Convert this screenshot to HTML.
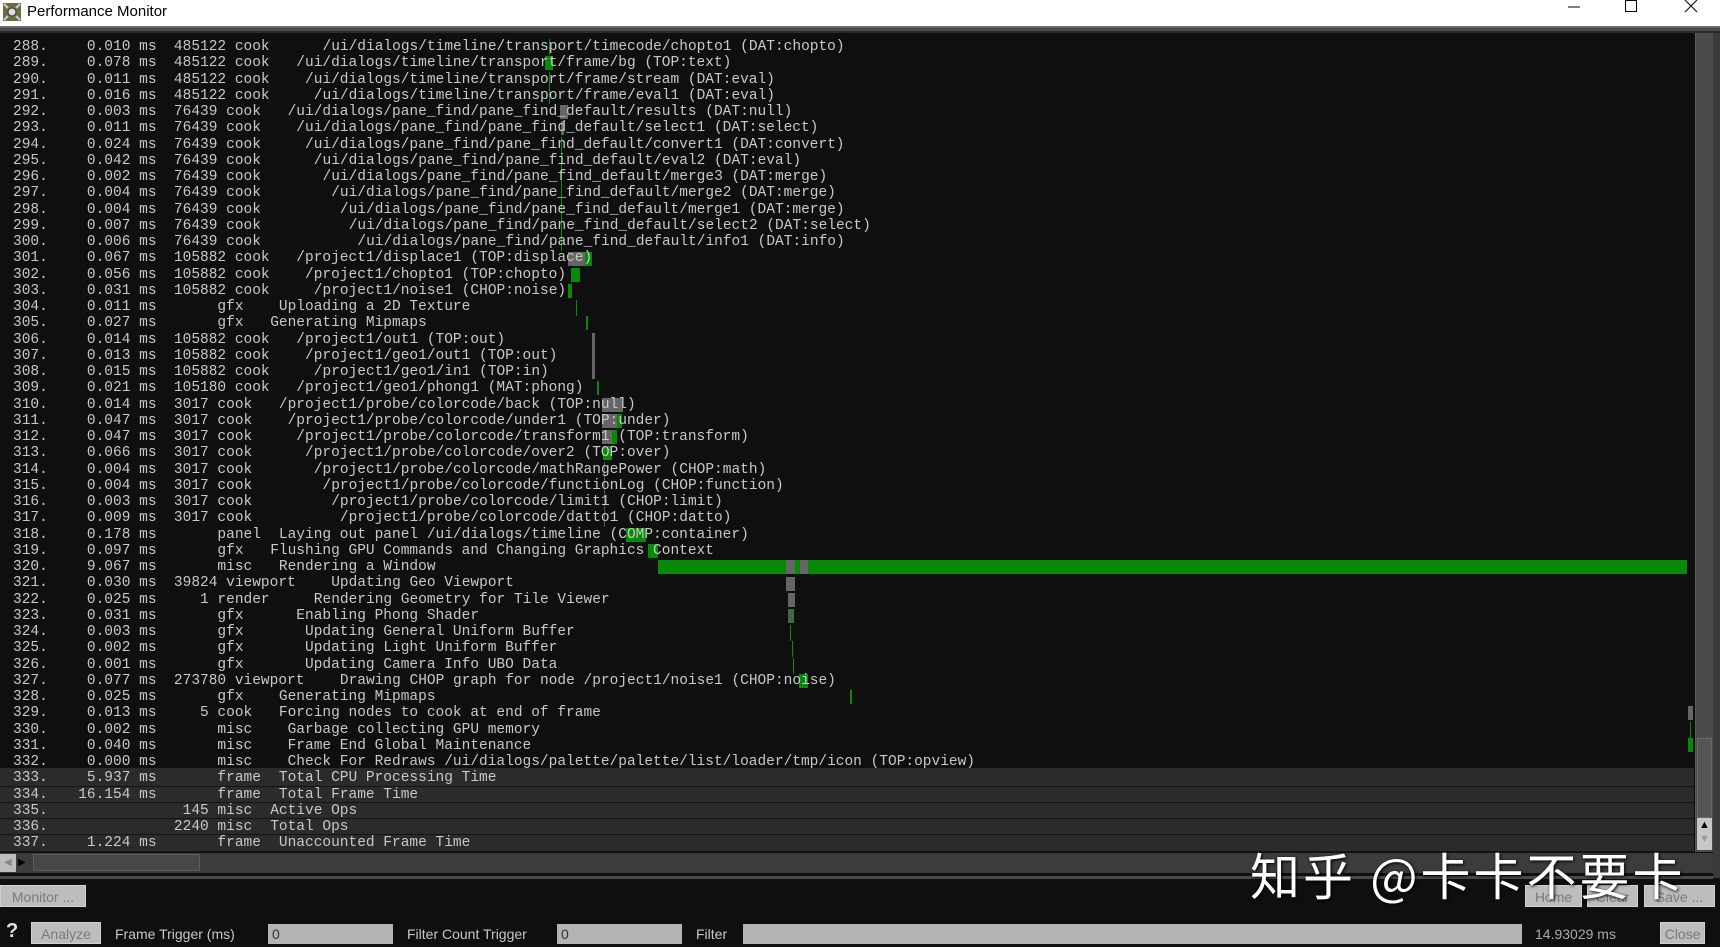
<!DOCTYPE html>
<html><head><meta charset="utf-8"><style>
*{margin:0;padding:0;box-sizing:border-box}
body{width:1720px;height:947px;background:#0f0f0f;position:relative;overflow:hidden;font-family:"Liberation Sans",sans-serif}
#title{position:absolute;left:0;top:0;width:1720px;height:26px;background:#fff;color:#000;font-size:15px}
#title .t{position:absolute;left:27px;top:3px}
#frame{position:absolute;left:0;top:26px;width:1720px;height:7px;background:#4a4a4a;border-top:2px solid #6a6a6a;border-bottom:2px solid #2a2a2a}
#rows{position:absolute;left:0;top:39px;width:1694px;font-family:"Liberation Mono",monospace;font-size:14.5px;color:#c8c8c8}
.r{height:16.25px;position:relative;white-space:pre;line-height:16px}
.r i{font-style:normal;position:absolute;left:13px;top:0}
.r s{text-decoration:none;position:absolute;left:17.3px;top:0}
.r b{font-weight:normal;position:absolute;top:0}
.g{background:#2b2b2b;border-bottom:1px solid #141414}
.bar{position:absolute;height:14px;background:#078a07}
.gr{position:absolute;height:14px;background:#666}
.ln{position:absolute;width:1px;height:16.25px;background:#0a8a0a}
#vs{position:absolute;left:1695px;top:33px;width:18px;height:819px;background:#4b4b4b;border-left:1px solid #5a5a5a}
#rf{position:absolute;left:1713px;top:33px;width:7px;height:845px;background:#3a3a3a}
#hs{position:absolute;left:0;top:853px;width:1713px;height:20px;background:#3c3c3c}
.btn{position:absolute;background:#bdbdbd;color:#7a7a7a;font-size:14px;text-align:center;line-height:22px;height:22px;border:1px solid #d0d0d0}
.lbl{position:absolute;color:#c8c8c8;font-size:14px;top:926px}
.inp{position:absolute;top:924px;height:20px;background:#b3b3b3;color:#333;font-size:14px;padding-left:4px;line-height:20px}
#wm{position:absolute;left:1250px;top:845px;font-family:"Noto Sans CJK SC",sans-serif;font-size:50px;color:#fff;text-shadow:1px 1px 3px #000;letter-spacing:3px;line-height:58px;white-space:nowrap}
</style></head><body>
<div id="title"><svg style="position:absolute;left:3px;top:3px" width="18" height="18"><rect width="18" height="18" fill="#6b6b4a"/><circle cx="9" cy="9" r="4" fill="#ddd" stroke="#333"/><path d="M1 1l4 4M17 1l-4 4M1 17l4-4M17 17l-4-4" stroke="#ccc" stroke-width="2"/></svg><span class="t">Performance Monitor</span>
<svg style="position:absolute;left:1565px;top:0" width="155" height="26"><path d="M3 7h12" stroke="#000"/><rect x="60.5" y="0.5" width="11" height="11" fill="none" stroke="#000"/><path d="M120 0l12 12M132 0l-12 12" stroke="#000"/></svg></div>
<div id="frame"></div>
<div id="rf"></div>
<div style="position:absolute;left:0;top:768px;width:1694px;height:82px;background:#2b2b2b"></div>
<!-- bars -->
<div style="position:absolute;left:0;top:0">
<div class="ln" style="left:549px;top:39px"></div>
<div class="bar" style="left:545px;top:56px;width:8px"></div>
<div class="ln" style="left:549px;top:72px;height:32px"></div>
<div class="gr" style="left:560px;top:105px;width:8px"></div>
<div class="gr" style="left:561px;top:121px;width:3px"></div>
<div class="ln" style="left:561px;top:137px;height:114px"></div>
<div class="gr" style="left:568px;top:252px;width:17px"></div>
<div class="bar" style="left:585px;top:252px;width:7px"></div>
<div class="bar" style="left:571px;top:268px;width:9px"></div>
<div class="bar" style="left:568px;top:284px;width:4px"></div>
<div class="ln" style="left:576px;top:300px"></div>
<div class="bar" style="left:586px;top:316px;width:2px"></div>
<div class="gr" style="left:592px;top:333px;width:3px;height:46px"></div>
<div class="bar" style="left:597px;top:381px;width:2px"></div>
<div class="gr" style="left:602px;top:398px;width:21px"></div>
<div class="gr" style="left:602px;top:414px;width:15px"></div><div class="bar" style="left:617px;top:414px;width:5px"></div>
<div class="gr" style="left:602px;top:430px;width:10px"></div><div class="bar" style="left:612px;top:430px;width:5px"></div>
<div class="bar" style="left:603px;top:446px;width:9px"></div>
<div class="ln" style="left:604px;top:462px;height:65px;background:#3a6a3a"></div>
<div class="bar" style="left:626px;top:528px;width:20px"></div>
<div class="bar" style="left:648px;top:544px;width:10px"></div>
<div class="bar" style="left:658px;top:560px;width:1029px"></div>
<div class="gr" style="left:786px;top:560px;width:9px"></div><div class="gr" style="left:800px;top:560px;width:8px"></div>
<div class="gr" style="left:786px;top:577px;width:9px"></div>
<div class="gr" style="left:788px;top:593px;width:7px"></div>
<div class="gr" style="left:788px;top:609px;width:6px;background:#3f6a3f"></div>
<div class="ln" style="left:790px;top:625px"></div><div class="ln" style="left:792px;top:641px"></div><div class="ln" style="left:793px;top:658px"></div>
<div class="bar" style="left:799px;top:674px;width:9px"></div>
<div class="bar" style="left:850px;top:690px;width:2px"></div>
<div class="gr" style="left:1688px;top:706px;width:5px"></div>
<div class="ln" style="left:1690px;top:722px"></div>
<div class="bar" style="left:1688px;top:738px;width:5px"></div>
</div>
<div id="rows">
<div class="r"><i>288.</i><s>        0.010 ms  485122 cook</s><b style="left:322.5px">/ui/dialogs/timeline/transport/timecode/chopto1 (DAT:chopto)</b></div>
<div class="r"><i>289.</i><s>        0.078 ms  485122 cook</s><b style="left:296.3px">/ui/dialogs/timeline/transport/frame/bg (TOP:text)</b></div>
<div class="r"><i>290.</i><s>        0.011 ms  485122 cook</s><b style="left:305px">/ui/dialogs/timeline/transport/frame/stream (DAT:eval)</b></div>
<div class="r"><i>291.</i><s>        0.016 ms  485122 cook</s><b style="left:313.8px">/ui/dialogs/timeline/transport/frame/eval1 (DAT:eval)</b></div>
<div class="r"><i>292.</i><s>        0.003 ms  76439 cook</s><b style="left:287.6px">/ui/dialogs/pane_find/pane_find_default/results (DAT:null)</b></div>
<div class="r"><i>293.</i><s>        0.011 ms  76439 cook</s><b style="left:296.3px">/ui/dialogs/pane_find/pane_find_default/select1 (DAT:select)</b></div>
<div class="r"><i>294.</i><s>        0.024 ms  76439 cook</s><b style="left:305px">/ui/dialogs/pane_find/pane_find_default/convert1 (DAT:convert)</b></div>
<div class="r"><i>295.</i><s>        0.042 ms  76439 cook</s><b style="left:313.8px">/ui/dialogs/pane_find/pane_find_default/eval2 (DAT:eval)</b></div>
<div class="r"><i>296.</i><s>        0.002 ms  76439 cook</s><b style="left:322.5px">/ui/dialogs/pane_find/pane_find_default/merge3 (DAT:merge)</b></div>
<div class="r"><i>297.</i><s>        0.004 ms  76439 cook</s><b style="left:331.2px">/ui/dialogs/pane_find/pane_find_default/merge2 (DAT:merge)</b></div>
<div class="r"><i>298.</i><s>        0.004 ms  76439 cook</s><b style="left:339.9px">/ui/dialogs/pane_find/pane_find_default/merge1 (DAT:merge)</b></div>
<div class="r"><i>299.</i><s>        0.007 ms  76439 cook</s><b style="left:348.7px">/ui/dialogs/pane_find/pane_find_default/select2 (DAT:select)</b></div>
<div class="r"><i>300.</i><s>        0.006 ms  76439 cook</s><b style="left:357.4px">/ui/dialogs/pane_find/pane_find_default/info1 (DAT:info)</b></div>
<div class="r"><i>301.</i><s>        0.067 ms  105882 cook</s><b style="left:296.3px">/project1/displace1 (TOP:displace)</b></div>
<div class="r"><i>302.</i><s>        0.056 ms  105882 cook</s><b style="left:305px">/project1/chopto1 (TOP:chopto)</b></div>
<div class="r"><i>303.</i><s>        0.031 ms  105882 cook</s><b style="left:313.8px">/project1/noise1 (CHOP:noise)</b></div>
<div class="r"><i>304.</i><s>        0.011 ms       gfx</s><b style="left:278.9px">Uploading a 2D Texture</b></div>
<div class="r"><i>305.</i><s>        0.027 ms       gfx</s><b style="left:270.2px">Generating Mipmaps</b></div>
<div class="r"><i>306.</i><s>        0.014 ms  105882 cook</s><b style="left:296.3px">/project1/out1 (TOP:out)</b></div>
<div class="r"><i>307.</i><s>        0.013 ms  105882 cook</s><b style="left:305px">/project1/geo1/out1 (TOP:out)</b></div>
<div class="r"><i>308.</i><s>        0.015 ms  105882 cook</s><b style="left:313.8px">/project1/geo1/in1 (TOP:in)</b></div>
<div class="r"><i>309.</i><s>        0.021 ms  105180 cook</s><b style="left:296.3px">/project1/geo1/phong1 (MAT:phong)</b></div>
<div class="r"><i>310.</i><s>        0.014 ms  3017 cook</s><b style="left:278.9px">/project1/probe/colorcode/back (TOP:null)</b></div>
<div class="r"><i>311.</i><s>        0.047 ms  3017 cook</s><b style="left:287.6px">/project1/probe/colorcode/under1 (TOP:under)</b></div>
<div class="r"><i>312.</i><s>        0.047 ms  3017 cook</s><b style="left:296.3px">/project1/probe/colorcode/transform1 (TOP:transform)</b></div>
<div class="r"><i>313.</i><s>        0.066 ms  3017 cook</s><b style="left:305px">/project1/probe/colorcode/over2 (TOP:over)</b></div>
<div class="r"><i>314.</i><s>        0.004 ms  3017 cook</s><b style="left:313.8px">/project1/probe/colorcode/mathRangePower (CHOP:math)</b></div>
<div class="r"><i>315.</i><s>        0.004 ms  3017 cook</s><b style="left:322.5px">/project1/probe/colorcode/functionLog (CHOP:function)</b></div>
<div class="r"><i>316.</i><s>        0.003 ms  3017 cook</s><b style="left:331.2px">/project1/probe/colorcode/limit1 (CHOP:limit)</b></div>
<div class="r"><i>317.</i><s>        0.009 ms  3017 cook</s><b style="left:339.9px">/project1/probe/colorcode/datto1 (CHOP:datto)</b></div>
<div class="r"><i>318.</i><s>        0.178 ms       panel</s><b style="left:278.9px">Laying out panel /ui/dialogs/timeline (COMP:container)</b></div>
<div class="r"><i>319.</i><s>        0.097 ms       gfx</s><b style="left:270.2px">Flushing GPU Commands and Changing Graphics Context</b></div>
<div class="r"><i>320.</i><s>        9.067 ms       misc</s><b style="left:278.9px">Rendering a Window</b></div>
<div class="r"><i>321.</i><s>        0.030 ms  39824 viewport</s><b style="left:331.2px">Updating Geo Viewport</b></div>
<div class="r"><i>322.</i><s>        0.025 ms     1 render</s><b style="left:313.8px">Rendering Geometry for Tile Viewer</b></div>
<div class="r"><i>323.</i><s>        0.031 ms       gfx</s><b style="left:296.3px">Enabling Phong Shader</b></div>
<div class="r"><i>324.</i><s>        0.003 ms       gfx</s><b style="left:305px">Updating General Uniform Buffer</b></div>
<div class="r"><i>325.</i><s>        0.002 ms       gfx</s><b style="left:305px">Updating Light Uniform Buffer</b></div>
<div class="r"><i>326.</i><s>        0.001 ms       gfx</s><b style="left:305px">Updating Camera Info UBO Data</b></div>
<div class="r"><i>327.</i><s>        0.077 ms  273780 viewport</s><b style="left:339.9px">Drawing CHOP graph for node /project1/noise1 (CHOP:noise)</b></div>
<div class="r"><i>328.</i><s>        0.025 ms       gfx</s><b style="left:278.9px">Generating Mipmaps</b></div>
<div class="r"><i>329.</i><s>        0.013 ms     5 cook</s><b style="left:278.9px">Forcing nodes to cook at end of frame</b></div>
<div class="r"><i>330.</i><s>        0.002 ms       misc</s><b style="left:287.6px">Garbage collecting GPU memory</b></div>
<div class="r"><i>331.</i><s>        0.040 ms       misc</s><b style="left:287.6px">Frame End Global Maintenance</b></div>
<div class="r"><i>332.</i><s>        0.000 ms       misc</s><b style="left:287.6px">Check For Redraws /ui/dialogs/palette/palette/list/loader/tmp/icon (TOP:opview)</b></div>
<div class="r g"><i>333.</i><s>        5.937 ms       frame</s><b style="left:278.9px">Total CPU Processing Time</b></div>
<div class="r g"><i>334.</i><s>       16.154 ms       frame</s><b style="left:278.9px">Total Frame Time</b></div>
<div class="r g"><i>335.</i><s>                   145 misc</s><b style="left:270.2px">Active Ops</b></div>
<div class="r g"><i>336.</i><s>                  2240 misc</s><b style="left:270.2px">Total Ops</b></div>
<div class="r g"><i>337.</i><s>        1.224 ms       frame</s><b style="left:278.9px">Unaccounted Frame Time</b></div>
</div>
<div id="vs"><div style="position:absolute;left:1px;top:705px;width:15px;height:80px;background:#555;border:1px solid #6a6a6a"></div>
<div style="position:absolute;left:1px;top:785px;width:15px;height:32px;background:#c8c8c8;font-size:11px;text-align:center;line-height:14px;color:#000">▲<br><span style="color:#999">▼</span></div></div>
<div id="hs"><div style="position:absolute;left:0;top:1px;width:16px;height:18px;background:#bdbdbd;color:#888;font-size:10px;line-height:18px;text-align:center">◀</div><div style="position:absolute;left:18px;top:1px;color:#000;font-size:10px;line-height:18px">▶</div><div style="position:absolute;left:33px;top:1px;width:167px;height:17px;background:#474747;border:1px solid #5c5c5c"></div></div>
<div style="position:absolute;left:0;top:876px;width:1713px;height:3px;background:#4a4a4a"></div>
<div class="btn" style="left:0;top:885px;width:86px">Monitor ...</div>
<div class="btn" style="left:1525px;top:885px;width:57px">Home</div>
<div class="btn" style="left:1587px;top:885px;width:51px">Clear</div>
<div class="btn" style="left:1644px;top:885px;width:71px">Save ...</div>
<div style="position:absolute;left:6px;top:920px;color:#e0e0e0;font-size:20px;font-weight:bold">?</div>
<div class="btn" style="left:31px;top:922px;width:70px">Analyze</div>
<div class="lbl" style="left:115px">Frame Trigger (ms)</div>
<div class="inp" style="left:268px;width:125px">0</div>
<div class="lbl" style="left:407px">Filter Count Trigger</div>
<div class="inp" style="left:557px;width:125px">0</div>
<div class="lbl" style="left:696px">Filter</div>
<div class="inp" style="left:743px;width:779px"></div>
<div class="lbl" style="left:1535px;color:#aaa">14.93029 ms</div>
<div class="btn" style="left:1660px;top:922px;width:45px">Close</div>
<div id="wm">知乎 @卡卡不要卡</div>
</body></html>
